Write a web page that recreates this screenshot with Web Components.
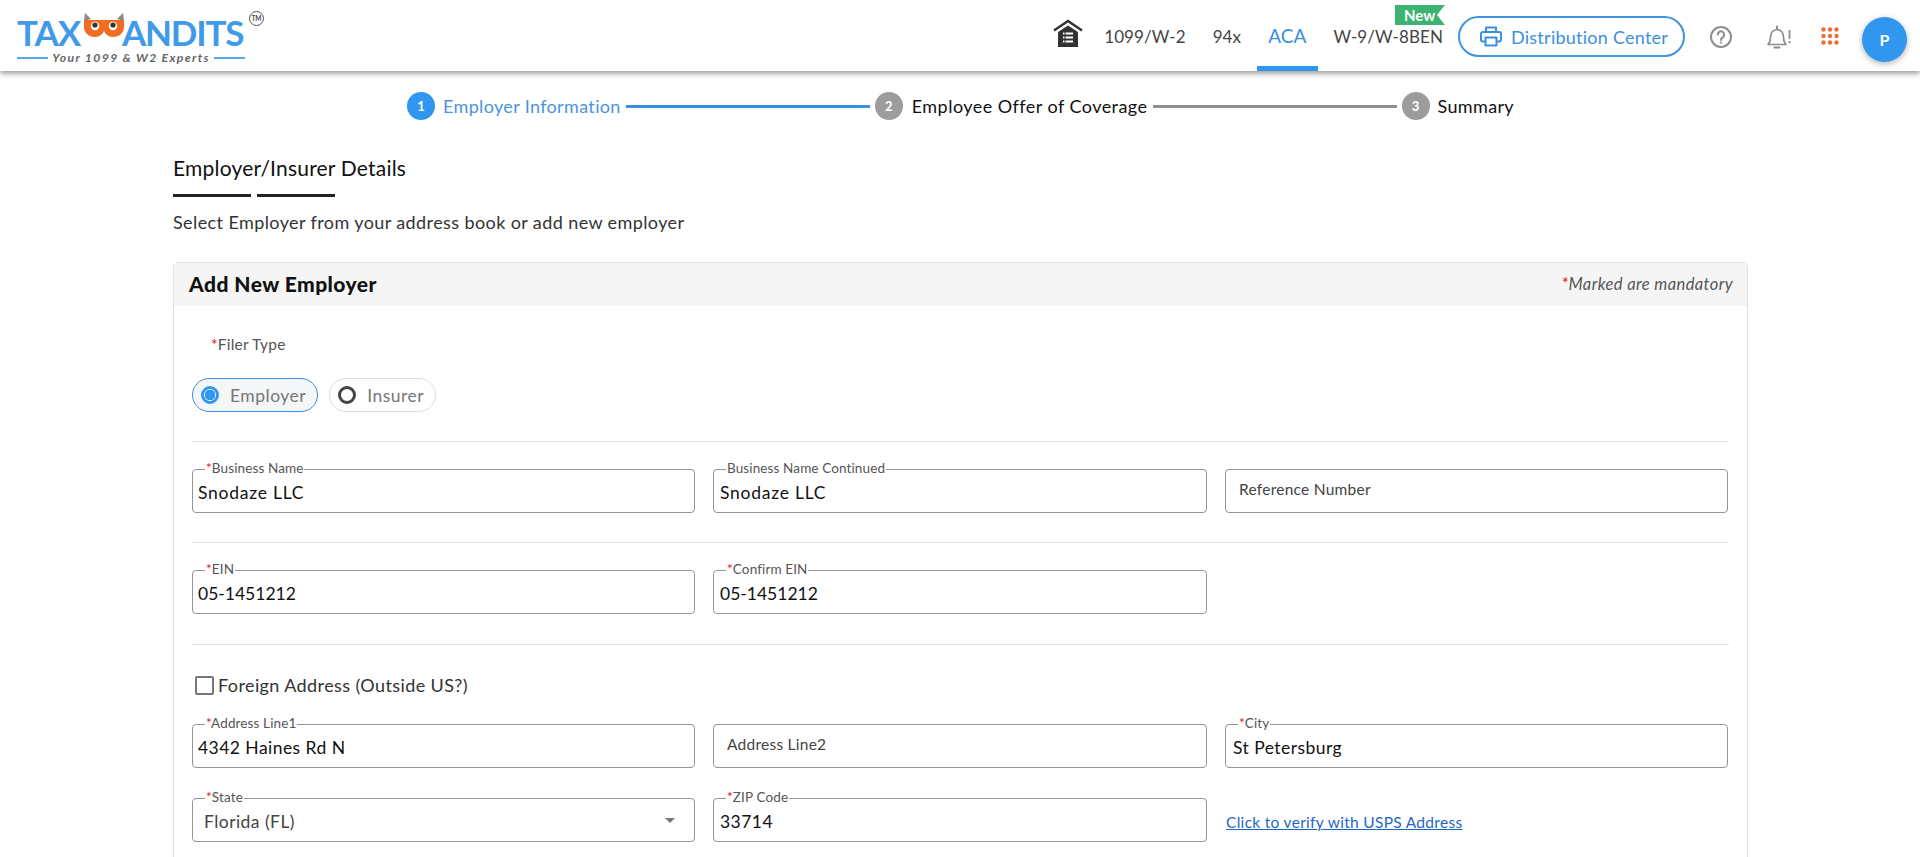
<!DOCTYPE html>
<html lang="en">
<head>
<meta charset="utf-8">
<title>TaxBandits - Employer Information</title>
<style>
  html, body { margin: 0; height: 100%; overflow: hidden; background: #fff; }
  body { font-family: Lato, "Open Sans", sans-serif; color: #222; }
  main { display: block; padding: 0 172px 0 173px; }
</style>
</head>
<body>
<tax-header>
  <nav-link>1099/W-2</nav-link>
  <nav-link>94x</nav-link>
  <nav-link active>ACA</nav-link>
  <nav-link badge="New">W-9/W-8BEN</nav-link>
</tax-header>

<tax-stepper>
  <step-item num="1" active>Employer Information</step-item>
  <step-line active></step-line>
  <step-item num="2" style="letter-spacing:.46px;gap:9px">Employee Offer of Coverage</step-item>
  <step-line></step-line>
  <step-item num="3">Summary</step-item>
</tax-stepper>

<main>
  <section-title sub="Select Employer from your address book or add new employer">Employer/Insurer Details</section-title>
  <form-card heading="Add New Employer">
    <filer-type>
      <radio-pill checked>Employer</radio-pill>
      <radio-pill>Insurer</radio-pill>
    </filer-type>
    <form-row>
      <text-field label="Business Name" required value="Snodaze LLC" style="padding-left:5px;letter-spacing:.75px"></text-field>
      <text-field label="Business Name Continued" value="Snodaze LLC" style="padding-left:6px;letter-spacing:.75px"></text-field>
      <text-field placeholder="Reference Number"></text-field>
    </form-row>
    <form-row style="padding-bottom:30px">
      <text-field label="EIN" required value="05-1451212" style="padding-left:5px;letter-spacing:0"></text-field>
      <text-field label="Confirm EIN" required value="05-1451212" style="padding-left:6px;letter-spacing:0"></text-field>
    </form-row>
    <form-row plain>
      <check-field slot="top">Foreign Address (Outside US?)</check-field>
      <text-field label="Address Line1" required value="4342 Haines Rd N" style="padding-left:5px"></text-field>
      <text-field placeholder="Address Line2"></text-field>
      <text-field label="City" required value="St Petersburg"></text-field>
      <text-field label="State" required value="Florida (FL)" select></text-field>
      <text-field label="ZIP Code" required value="33714" style="padding-left:6px"></text-field>
      <verify-link>Click to verify with USPS Address</verify-link>
    </form-row>
  </form-card>
</main>

<script>
class TaxLogo extends HTMLElement {
  connectedCallback() {
    this.attachShadow({ mode: 'open' }).innerHTML = `
      <style>
        :host { display: block; width: 250px; height: 71px; position: relative; flex: none; }
        .word { display: flex; align-items: flex-start; padding: 12px 0 0 17px; height: 36px; white-space: nowrap;
          font: 700 35px/40px Lato, sans-serif; color: #3f9be8; letter-spacing: -1px; }
        .word svg { flex: none; }
        .word span.a { width: 66px; }
        .word span.b { margin-left: -3px; letter-spacing: -1.2px; }
        .tag { display: flex; align-items: center; gap: 4px; margin: 2px 0 0 17px; width: 228px;
          font: italic 700 12.2px/16px Lato, sans-serif; color: #666; letter-spacing: 1.35px; white-space: nowrap; }
        .tag i { flex: 1; height: 1.5px; background: #5aa9ea; }
        .tm { position: absolute; left: 249px; top: 11px; width: 13px; height: 13px; border: 1px solid #555; border-radius: 50%;
          font: 700 6.5px/13px Lato, sans-serif; text-align: center; color: #444; }
      </style>
      <div class="word"><span class="a">TAX</span>
        <svg width="42" height="26" viewBox="0 0 42 26">
          <path d="M1 9L2 1l6 6zM41 9l-1-8-6 6z" fill="#8a8a8a"/>
          <path d="M1 8h40v7c0 6-5 10-11 10-4 0-7-2-9-6-2 4-5 6-9 6C6 25 1 21 1 15z" fill="#f26c22"/>
          <circle cx="12" cy="14" r="4.2" fill="#fff"/><circle cx="30" cy="14" r="4.2" fill="#fff"/>
          <circle cx="12" cy="13" r="2.6" fill="#333"/><circle cx="30" cy="13" r="2.6" fill="#333"/>
        </svg><span class="b">ANDITS</span></div>
      <div class="tag"><i></i>Your 1099 &amp; W2 Experts<i></i></div>
      <div class="tm">TM</div>`;
  }
}
customElements.define('tax-logo', TaxLogo);

class TaxHeader extends HTMLElement {
  connectedCallback() {
    this.attachShadow({ mode: 'open' }).innerHTML = `
      <style>
        :host { display: flex; align-items: stretch; height: 71px; background: #fff; position: relative;
          box-shadow: 0 2px 6px rgba(0,0,0,.45); }
        .nav { display: flex; align-items: stretch; margin-left: auto; }
        .home { align-self: flex-start; margin: 19px 10px 0 0; display: block; }
        .btn { align-self: flex-start; box-sizing: border-box; margin: 16px 0 0 4px; width: 227px; height: 41px; border: 2px solid #3f93e0;
          border-radius: 21px; display: flex; align-items: center; gap: 9px; padding-left: 20px; color: #3a8fdf; font-size: 18px; white-space: nowrap; letter-spacing: .25px; }
        .ico { align-self: flex-start; display: block; }
        .av { box-sizing: border-box; margin: 17px 13px 0 23px; width: 45px; height: 45px; border-radius: 50%; background: #3196f0; color: #fff;
          font: 700 16px/45px Lato, sans-serif; text-align: center; box-shadow: 0 2px 6px rgba(0,0,0,.3); }
      </style>
      <tax-logo></tax-logo>
      <div class="nav">
        <svg class="home" width="30" height="28" viewBox="0 0 30 28">
          <path d="M1 11.5L15 2l14 9.5" fill="none" stroke="#333" stroke-width="2.4"/>
          <path d="M5 13L15 6.5 25 13v15H5z" fill="#333"/>
          <path d="M10 14.5h10M10 18.5h10M10 22.5h10" stroke="#fff" stroke-width="2"/>
          <path d="M12 13v11" stroke="#333" stroke-width="1"/>
        </svg>
        <slot></slot>
      </div>
      <div class="btn">
        <svg width="22" height="21" viewBox="0 0 22 21" fill="none" stroke="#3a8fdf" stroke-width="2" stroke-linejoin="round">
          <path d="M6 6V1.5h10V6"/>
          <path d="M5.5 15.5H3a2 2 0 0 1-2-2V8a2 2 0 0 1 2-2h16a2 2 0 0 1 2 2v5.5a2 2 0 0 1-2 2h-2.5"/>
          <path d="M5.5 11.5h11v8h-11z"/>
        </svg>Distribution Center</div>
      <svg class="ico" style="margin:26px 0 0 25px" width="22" height="22" viewBox="0 0 22 22" fill="none" stroke="#8d8d8d" stroke-width="2">
        <circle cx="11" cy="11" r="10"/>
        <path d="M7.8 8.6a3.2 3.2 0 1 1 4.9 2.7c-1.2.8-1.7 1.4-1.7 2.7" stroke-linecap="round"/>
        <circle cx="11" cy="16.6" r=".7" fill="#8d8d8d" stroke-width="1"/>
      </svg>
      <svg class="ico" style="margin:24px 0 0 35px" width="24" height="25" viewBox="0 0 24 25" fill="none" stroke="#8d8d8d" stroke-width="1.6">
        <path d="M1 20.5h18c-1.8-1.8-2.5-3.5-2.5-7.5 0-4-2.5-7.5-6.5-7.5S3.5 9 3.5 13c0 4-.7 5.7-2.500 7.500z" stroke-linejoin="round"/>
        <path d="M10 5.5V2.5M7.5 23.5h5" stroke-linecap="round" stroke-width="2"/>
        <path d="M22.5 6v9M22.5 17v2.2" stroke-width="1.8"/>
      </svg>
      <svg class="ico" style="margin:27px 0 0 30px" width="18" height="18" viewBox="0 0 18 18" fill="#e9703a">
        <circle cx="2.5" cy="2.5" r="2.2"/><circle cx="9" cy="2.5" r="2.2"/><circle cx="15.5" cy="2.5" r="2.2"/>
        <circle cx="2.5" cy="9" r="2.2"/><circle cx="9" cy="9" r="2.2"/><circle cx="15.5" cy="9" r="2.2"/>
        <circle cx="2.5" cy="15.5" r="2.2"/><circle cx="9" cy="15.5" r="2.2"/><circle cx="15.5" cy="15.5" r="2.2"/>
      </svg>
      <div class="av">P</div>`;
  }
}
customElements.define('tax-header', TaxHeader);

class NavLink extends HTMLElement {
  connectedCallback() {
    const badge = this.getAttribute('badge');
    this.attachShadow({ mode: 'open' }).innerHTML = `
      <style>
        :host { display: block; position: relative; box-sizing: border-box; height: 71px; padding: 0 11px; margin-right: 5px;
          font-size: 17px; line-height: 74px; color: #444; white-space: nowrap; letter-spacing: .1px; }
        :host([active]) { color: #3a8fdf; font-size: 19px; line-height: 72px; border-bottom: 5px solid #3196f0; }
        :host([badge]) { margin-right: 0; }
        .b { position: absolute; right: 9px; top: 5px; width: 50px; height: 20px; background: #3cb371; color: #fff;
          font: 700 15px/20px Lato, sans-serif; padding-left: 9px; box-sizing: border-box; letter-spacing: 0;
          clip-path: polygon(0 0, 100% 0, 84% 50%, 100% 100%, 0 100%); }
      </style>
      <slot></slot>${badge ? `<span class="b">${badge}</span>` : ''}`;
  }
}
customElements.define('nav-link', NavLink);

class TaxStepper extends HTMLElement {
  connectedCallback() {
    this.attachShadow({ mode: 'open' }).innerHTML = `
      <style>:host { display: flex; align-items: center; height: 28px; padding: 21px 0 0 407px; }</style>
      <slot></slot>`;
  }
}
customElements.define('tax-stepper', TaxStepper);

class StepItem extends HTMLElement {
  connectedCallback() {
    this.attachShadow({ mode: 'open' }).innerHTML = `
      <style>
        :host { display: flex; align-items: center; gap: 8px; font-size: 18px; color: #111; white-space: nowrap; letter-spacing: .35px; }
        :host([active]) { color: #4a94e0; }
        b { width: 28px; height: 28px; border-radius: 50%; background: #9c9c9c; color: #fff; font: 700 13px/28px Lato, sans-serif; text-align: center; letter-spacing: 0; }
        :host([active]) b { background: #3196f0; }
      </style>
      <b>${this.getAttribute('num')}</b><slot></slot>`;
  }
}
customElements.define('step-item', StepItem);

class StepLine extends HTMLElement {
  connectedCallback() {
    this.attachShadow({ mode: 'open' }).innerHTML = `
      <style>
        :host { display: block; width: 244px; height: 3px; margin: 0 5px; background: #8f8f8f; }
        :host([active]) { background: #3a8fdf; }
      </style>`;
  }
}
customElements.define('step-line', StepLine);

class SectionTitle extends HTMLElement {
  connectedCallback() {
    this.attachShadow({ mode: 'open' }).innerHTML = `
      <style>
        :host { display: block; padding-top: 34px; }
        h2 { margin: 0; font-size: 21px; font-weight: 400; line-height: 28px; color: #111; letter-spacing: .2px; }
        .bars { display: flex; gap: 6px; margin-top: 12px; }
        .bars i { width: 78px; height: 3px; background: #222; }
        p { margin: 13px 0 28px; font-size: 18px; line-height: 24px; color: #333; letter-spacing: .4px; }
      </style>
      <h2><slot></slot></h2>
      <div class="bars"><i></i><i></i></div>
      <p>${this.getAttribute('sub')}</p>`;
  }
}
customElements.define('section-title', SectionTitle);

class FormCard extends HTMLElement {
  connectedCallback() {
    this.attachShadow({ mode: 'open' }).innerHTML = `
      <style>
        :host { display: block; border: 1px solid #e2e2e2; border-radius: 5px; height: 800px; }
        .head { display: flex; justify-content: space-between; align-items: center; box-sizing: border-box; height: 43px; padding: 0 14px 2px 15px; background: #f5f5f5; }
        h3 { margin: 0; font-size: 21px; font-weight: 900; color: #111; letter-spacing: .45px; }
        em { font-size: 16.5px; color: #555; letter-spacing: .4px; }
        em span { color: #e01010; }
        .body { padding: 0 18px; }
      </style>
      <div class="head"><h3>${this.getAttribute('heading')}</h3><em><span>*</span>Marked are mandatory</em></div>
      <div class="body"><slot></slot></div>`;
  }
}
customElements.define('form-card', FormCard);

class FilerType extends HTMLElement {
  connectedCallback() {
    this.attachShadow({ mode: 'open' }).innerHTML = `
      <style>
        :host { display: block; padding: 28px 0 29px; border-bottom: 1px solid #e4e4e4; }
        .l { padding-left: 19px; font-size: 15.5px; line-height: 20px; color: #555; letter-spacing: .2px; }
        .l span { color: #e01010; }
        .o { display: flex; gap: 11px; margin-top: 24px; }
      </style>
      <div class="l"><span>*</span>Filer Type</div>
      <div class="o"><slot></slot></div>`;
  }
}
customElements.define('filer-type', FilerType);

class RadioPill extends HTMLElement {
  connectedCallback() {
    this.attachShadow({ mode: 'open' }).innerHTML = `
      <style>
        :host { display: flex; align-items: center; gap: 11px; box-sizing: border-box; height: 34px; padding: 0 11px 0 8px; border: 1px solid #ddd; border-radius: 17px;
          font-size: 17.5px; color: #777; letter-spacing: .5px; }
        :host([checked]) { border-color: #3a8fdf; background: #f4f6f8; }
        i { box-sizing: border-box; width: 18px; height: 18px; border-radius: 50%; border: 3px solid #444; background: #fff; }
        :host([checked]) i { border-color: #3196f0; background: radial-gradient(circle, #3196f0 0 5px, #fff 5.5px); }
      </style>
      <i></i><slot></slot>`;
  }
}
customElements.define('radio-pill', RadioPill);

class FormRow extends HTMLElement {
  connectedCallback() {
    this.attachShadow({ mode: 'open' }).innerHTML = `
      <style>
        :host { display: block; padding: 27px 0 29px; border-bottom: 1px solid #e4e4e4; }
        :host([plain]) { border-bottom: 0; padding-top: 28px; }
        .g { display: grid; grid-template-columns: 503px 494px 503px; column-gap: 18px; row-gap: 30px; }
        ::slotted(check-field) { margin-bottom: 27px; }
      </style>
      <slot name="top"></slot>
      <div class="g"><slot></slot></div>`;
  }
}
customElements.define('form-row', FormRow);

class TextField extends HTMLElement {
  connectedCallback() {
    const label = this.getAttribute('label');
    const value = this.getAttribute('value');
    const ph = this.getAttribute('placeholder');
    const star = this.hasAttribute('required') ? '<span>*</span>' : '';
    this.attachShadow({ mode: 'open' }).innerHTML = `
      <style>
        :host { display: flex; align-items: center; position: relative; box-sizing: border-box; height: 44px; padding: 2px 7px 0; border: 1px solid #949494; border-radius: 4px;
          font-size: 17.5px; color: #111; letter-spacing: .45px; white-space: nowrap; }
        :host([select]) { padding-left: 11px; color: #444; }
        label { position: absolute; left: 12px; top: -9px; padding: 0 1px; background: #fff; font-size: 13.5px; line-height: 15px; color: #555; letter-spacing: .12px; }
        label span { color: #e01010; }
        .ph { font-size: 15.5px; color: #444; padding: 0 0 7px 6px; letter-spacing: .25px; }
        svg { position: absolute; right: 19px; top: 19px; }
      </style>
      ${label ? `<label>${star}${label}</label>` : ''}
      ${value ? `<div>${value}</div>` : ''}
      ${ph ? `<div class="ph">${ph}</div>` : ''}
      ${this.hasAttribute('select') ? '<svg width="10" height="5" viewBox="0 0 10 5"><path d="M0 0h10L5 5z" fill="#777"/></svg>' : ''}`;
  }
}
customElements.define('text-field', TextField);

class CheckField extends HTMLElement {
  connectedCallback() {
    this.attachShadow({ mode: 'open' }).innerHTML = `
      <style>
        :host { display: flex; align-items: center; gap: 4px; height: 24px; padding-left: 3px; font-size: 18px; color: #333; letter-spacing: .4px; }
        i { box-sizing: border-box; width: 19px; height: 19px; border: 2px solid #777; border-radius: 2px; }
      </style>
      <i></i><slot></slot>`;
  }
}
customElements.define('check-field', CheckField);

class VerifyLink extends HTMLElement {
  connectedCallback() {
    this.attachShadow({ mode: 'open' }).innerHTML = `
      <style>
        :host { display: flex; align-items: center; font-size: 15.5px; color: #1f66c1; text-decoration: underline; padding: 4px 0 0 1px; letter-spacing: .3px; }
      </style>
      <slot></slot>`;
  }
}
customElements.define('verify-link', VerifyLink);
</script>
</body>
</html>
